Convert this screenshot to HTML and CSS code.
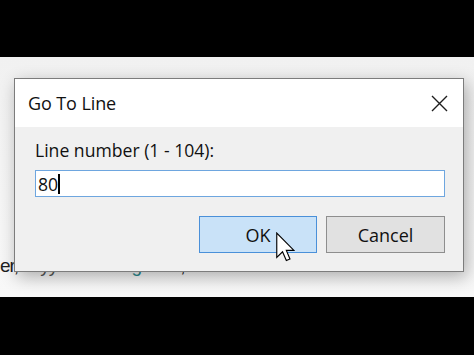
FILE: index.html
```html
<!DOCTYPE html>
<html>
<head>
<meta charset="utf-8">
<link rel="stylesheet" href="styles.css">
</head>
<body>
<div class="screen">
  <div class="editor">
    <div class="code-line"><span class="plain">er,</span><span class="plain gap1">yy</span><span class="str">Standing</span><span class="plain gap2">,</span></div>
  </div>

  <div class="dialog">
    <div class="titlebar">
      <span class="title">Go To Line</span>
      <svg class="close" width="17" height="17" viewBox="0 0 17 17">
        <path d="M1 1 L16 16 M16 1 L1 16" stroke="#1e1e1e" stroke-width="1.4" fill="none"/>
      </svg>
    </div>
    <div class="body">
      <div class="label">Line number (1 - 104):</div>
      <div class="input"><span class="value">80</span><span class="caret"></span></div>
      <div class="buttons">
        <div class="btn btn-ok">OK</div>
        <div class="btn btn-cancel">Cancel</div>
      </div>
    </div>
  </div>

  <svg class="cursor" width="19" height="31" viewBox="0 0 12.5 20">
    <path d="M0.5 0.5 L0.5 16.5 L4.3 12.8 L6.8 18.6 L9.2 17.6 L6.8 11.9 L11.8 11.9 Z" fill="#ffffff" stroke="#000000" stroke-width="0.75" stroke-linejoin="miter"/>
  </svg>
</div>
</body>
</html>
```

FILE: styles.css
```css
html, body {
  margin: 0;
  padding: 0;
}

body {
  background: #000000;
  width: 474px;
  height: 355px;
  overflow: hidden;
  font-family: "Open Sans", "Noto Sans", sans-serif;
}

.screen {
  margin-top: 57px;
  height: 240px;
  background: linear-gradient(#f1f1f1, #f8f8f8);
  position: relative;
  overflow: hidden;
}

.editor {
  padding-top: 198px;
}

.code-line {
  font-family: "Liberation Sans", sans-serif;
  font-size: 19px;
  line-height: 22px;
  letter-spacing: -1px;
  white-space: pre;
}

.plain {
  color: #1e1e1e;
}

.gap1 {
  margin-left: 22px;
  color: #555555;
}

.gap2 {
  margin-left: 38px;
}

.str {
  margin-left: 10px;
  color: #2b8a8f;
  letter-spacing: 0;
}

.dialog {
  position: absolute;
  left: 14px;
  top: 21px;
  width: 450px;
  height: 194px;
  box-sizing: border-box;
  border: 1px solid #7c7c7c;
  background: #f0f0f0;
  box-shadow: 3px 5px 16px rgba(0, 0, 0, 0.3);
  display: flex;
  flex-direction: column;
}

.titlebar {
  height: 48px;
  background: #ffffff;
  display: flex;
  align-items: center;
  justify-content: space-between;
  padding: 0 15px 0 13px;
}

.title {
  font-size: 18px;
  color: #111111;
  letter-spacing: -0.1px;
}

.close {
  display: block;
}

.body {
  padding: 11px 18px 18px 20px;
  display: flex;
  flex-direction: column;
}

.label {
  font-size: 17.6px;
  line-height: 24px;
  color: #111111;
}

.input {
  margin-top: 8px;
  height: 27px;
  box-sizing: border-box;
  border: 1px solid #6ea6df;
  background: #ffffff;
  display: flex;
  align-items: center;
  padding-left: 2px;
}

.value {
  font-size: 17.6px;
  color: #111111;
  line-height: 20px;
}

.caret {
  width: 1.5px;
  height: 20px;
  background: #000000;
}

.buttons {
  margin-top: 19px;
  display: flex;
  justify-content: flex-end;
  gap: 9px;
}

.btn {
  height: 37px;
  box-sizing: border-box;
  display: flex;
  align-items: center;
  justify-content: center;
  font-size: 18px;
  color: #111111;
}

.btn-ok {
  width: 118px;
  background: #c9e2f8;
  border: 1.5px solid #4a90d9;
}

.btn-cancel {
  width: 119px;
  background: #e1e1e1;
  border: 1.5px solid #8e8e8e;
}

.cursor {
  position: absolute;
  left: 276px;
  top: 175px;
}
```
